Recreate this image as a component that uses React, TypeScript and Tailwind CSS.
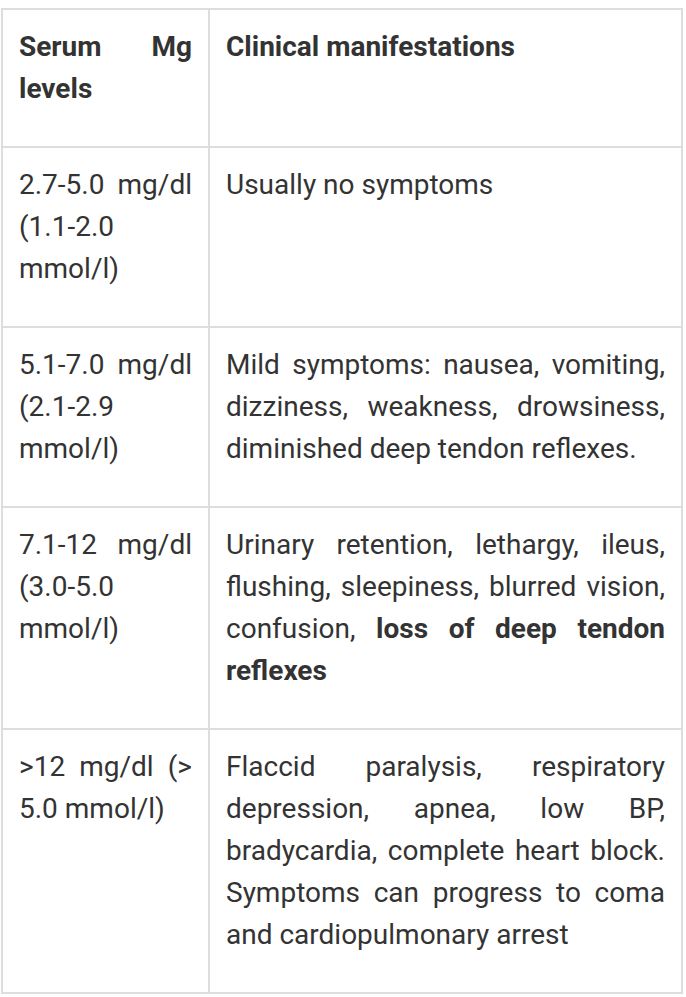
const rows = [
  {
    level: "2.7-5.0 mg/dl (1.1-2.0 mmol/l)",
    signs: <>Usually no symptoms</>,
  },
  {
    level: "5.1-7.0 mg/dl (2.1-2.9 mmol/l)",
    signs: <>Mild symptoms: nausea, vomiting, dizziness, weakness, drowsiness, diminished deep tendon reflexes.</>,
  },
  {
    level: "7.1-12 mg/dl (3.0-5.0 mmol/l)",
    signs: (
      <>
        Urinary retention, lethargy, ileus, flushing, sleepiness, blurred vision, confusion,{" "}
        <strong className="font-bold">loss of deep tendon reflexes</strong>
      </>
    ),
  },
  {
    level: ">12 mg/dl (> 5.0 mmol/l)",
    signs: (
      <>
        Flaccid paralysis, respiratory depression, apnea, low BP, bradycardia, complete heart block.
        Symptoms can progress to coma and cardiopulmonary arrest
      </>
    ),
  },
];

export default function App() {
  return (
    <div className="min-h-[997px] bg-white pl-px pt-[8px] font-['Roboto',sans-serif] text-[28px] leading-[42px] text-[#333333]">
      <table className="w-[682px] table-fixed border-collapse border-2 border-[#dddddd]">
        <colgroup>
          <col className="w-[207px]" />
          <col />
        </colgroup>
        <thead>
          <tr>
            <th className="border-2 border-[#dddddd] px-4 pt-4 pb-9 text-justify align-top font-bold">
              Serum Mg levels
            </th>
            <th className="border-2 border-[#dddddd] px-4 pt-4 pb-9 text-left align-top font-bold">
              Clinical manifestations
            </th>
          </tr>
        </thead>
        <tbody>
          {rows.map((row) => (
            <tr key={row.level}>
              <td className="border-2 border-[#dddddd] px-4 pt-4 pb-9 text-justify align-top">{row.level}</td>
              <td className="border-2 border-[#dddddd] px-4 pt-4 pb-9 text-justify align-top">{row.signs}</td>
            </tr>
          ))}
        </tbody>
      </table>
    </div>
  );
}
